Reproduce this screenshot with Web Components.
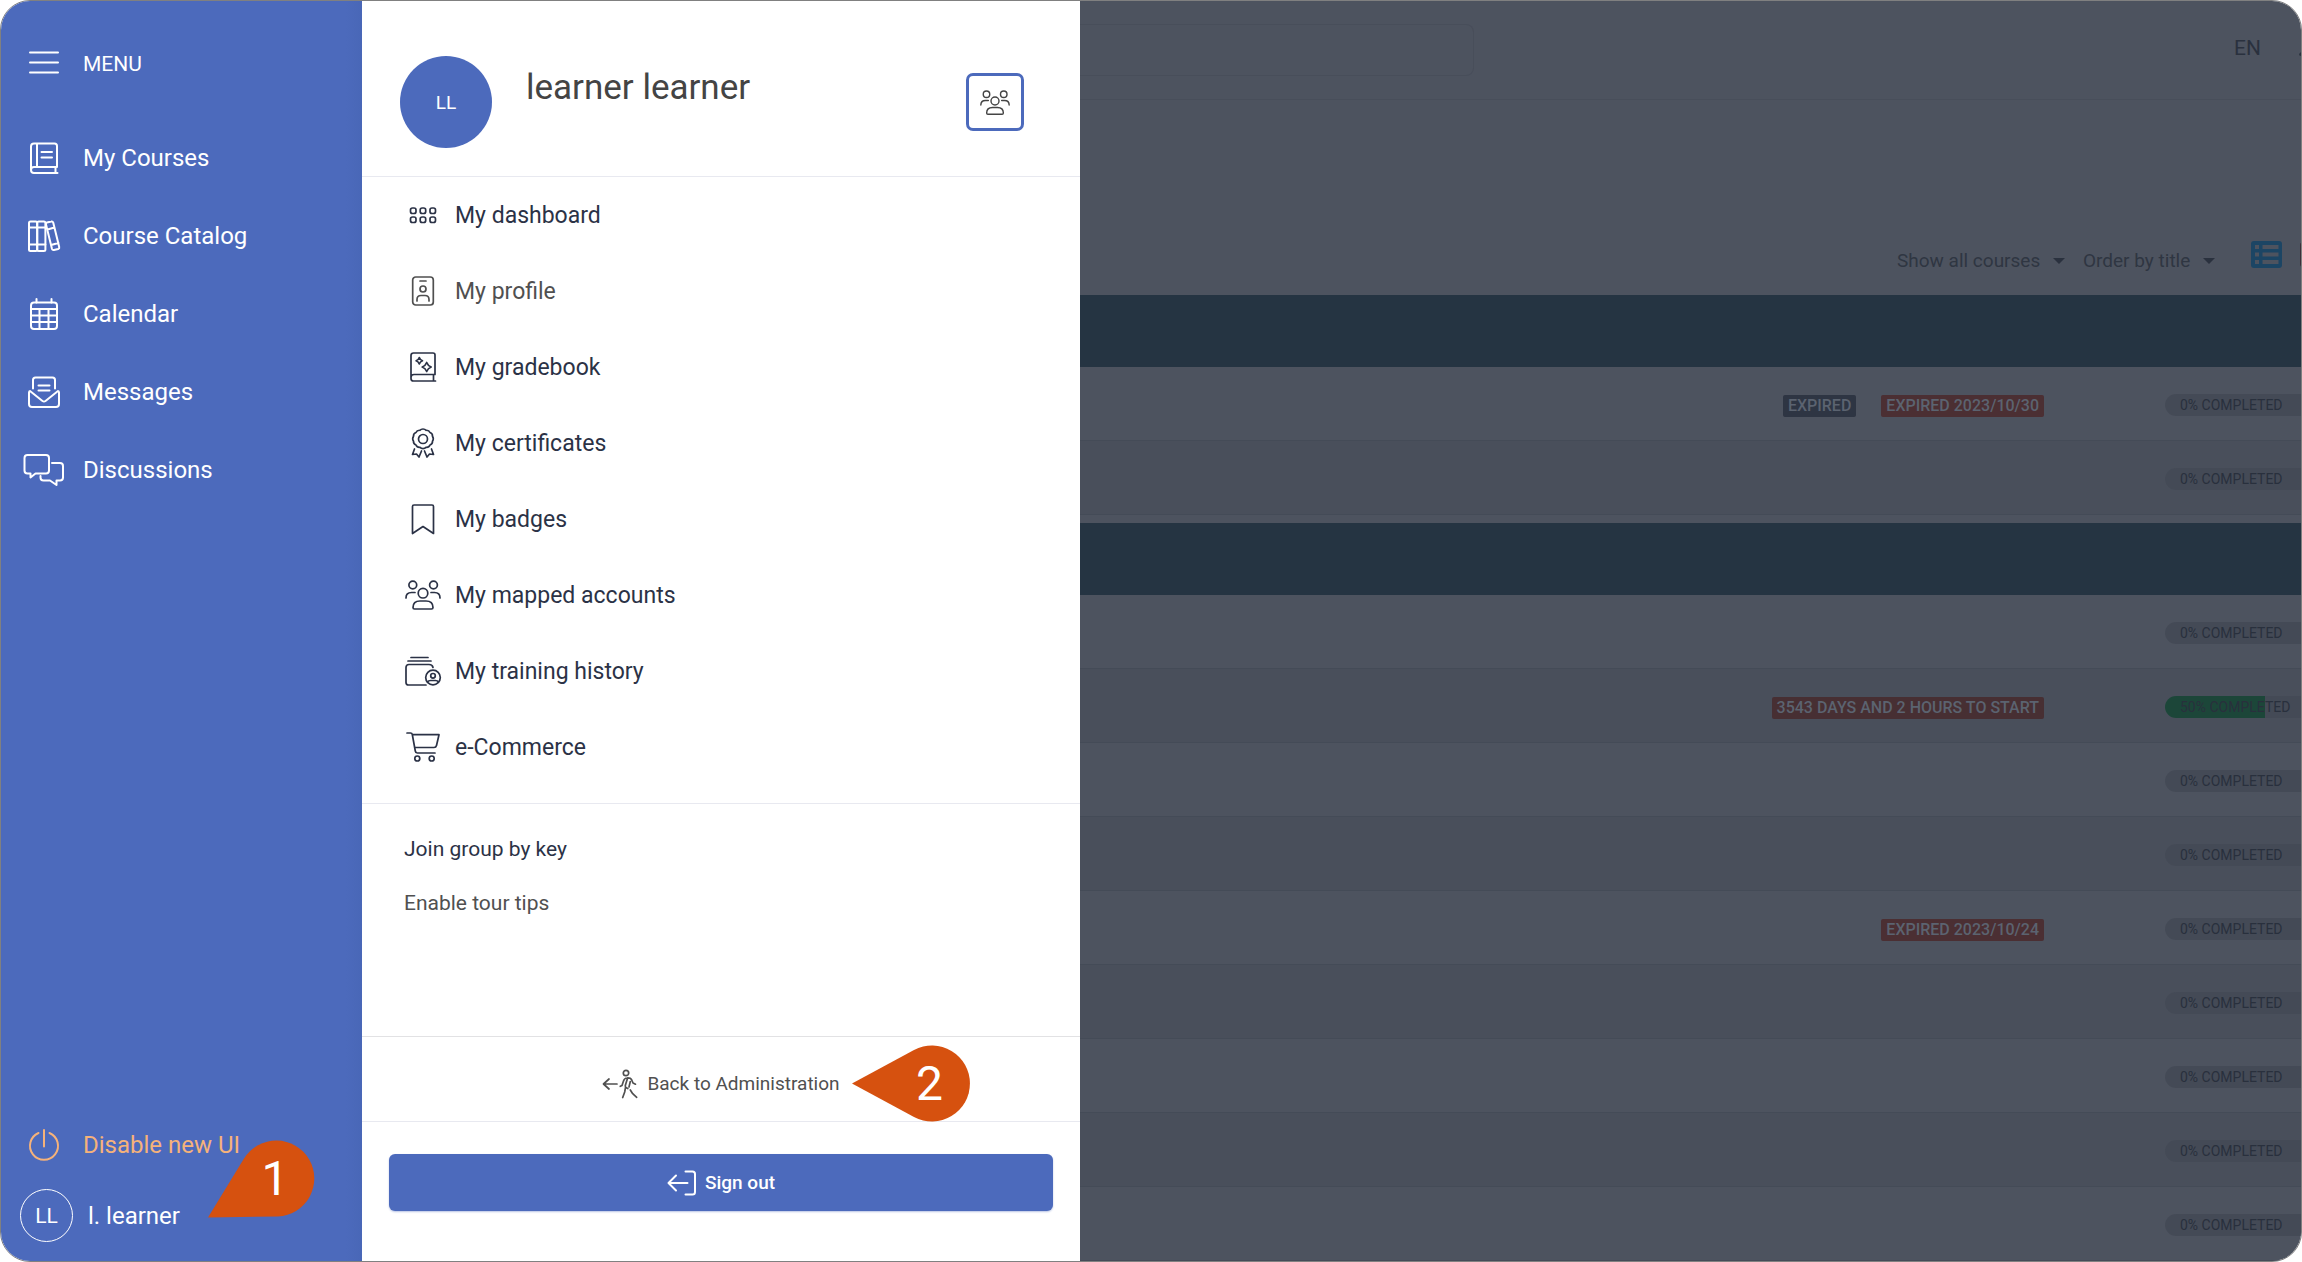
<!DOCTYPE html>
<html lang="en">
<head>
<meta charset="utf-8">
<title>My Courses</title>
<style>
    body {
        margin: 0;
        background: #fff;
        font-family: Roboto, "Liberation Sans", sans-serif;
    }
</style>
</head>
<body>
<learner-app></learner-app>

<script>
const ICONS = {
    menu: ['0 0 40 32', '<path d="M6 4.5h28M6 14.5h28M6 24.5h28"/>'],
    courses: ['0 0 40 32', '<path d="M33 25V4q0-2.500-2.500-2.500H10Q7 1.500 7 4.500v23.500q0 3 3 3h23.500M33 25H10q-3 0-3 3M31.500 25v6M13 2v23M17.500 10h10.500M17.500 15.500h10.500"/>'],
    catalog: ['0 0 40 32', '<rect x="5" y="1.5" width="8.2" height="29.5" rx="1.5"/><rect x="13.2" y="1.5" width="8.2" height="29.5" rx="1.5"/><path d="M5 7.500h16.400M5 24.500h16.400M22 4.500q-.5-1.600 1-2l4.200-1q1.500-.4 2 1l6 24.500q.4 1.500-1 2l-4.200 1q-1.500.4-2-1L22 4.500M23.500 9.500l7-2M27 25l7.500-2"/>'],
    calendar: ['0 0 40 32', '<rect x="7" y="4.5" width="26" height="26.5" rx="3"/><path d="M12.500 1v3.500M27.500 1v3.500M7 11h26M7 17.500h26M7 24h26M15.500 11v20M24.500 11v20"/>'],
    messages: ['0 0 40 32', '<path d="M9 12.500V4q0-2.500 2.500-2.500h17Q31 1.500 31 4v8.500M14.500 9.500h11M14.500 14.500h11M6 15q-1 0-1 1.500V28q0 3 3 3h24q3 0 3-3V16.500q0-1.500-1-1.500L21.500 25q-1.500 1-3 0Z"/>'],
    discussions: ['0 0 40 32', '<path d="M3.500 1h18.500q3 0 3 3v12.500q0 3-3 3H11.500L6.500 23.500v-4H3.500q-3 0-3-3V4q0-3 3-3ZM28 9h8q3 0 3 3v11.500q0 3-3 3h-3.500V31L26 26.500h-6.500q-3 0-3-3v-1.500"/>'],
    power: ['0 0 40 32', '<path d="M20 1v16.500M14.500 4A14 14 0 1 0 25.500 4"/>'],
    dashboard: ['0 0 36 30', '<rect x="5.5" y="8" width="5.5" height="5.5" rx="2"/><rect x="15.2" y="8" width="5.5" height="5.5" rx="2"/><rect x="25" y="8" width="5.5" height="5.5" rx="2"/><rect x="5.5" y="17" width="5.5" height="5.5" rx="2"/><rect x="15.2" y="17" width="5.5" height="5.5" rx="2"/><rect x="25" y="17" width="5.5" height="5.5" rx="2"/>'],
    profile: ['0 0 36 30', '<rect x="7.7" y="1" width="20.6" height="28" rx="3"/><path d="M15 5h6M12 25v-1.500q0-4 4-4h4q4 0 4 4V25"/><circle cx="18" cy="13" r="3"/>'],
    gradebook: ['0 0 36 30', '<path d="M30 22.500V3q0-2-2-2H8.500Q6 1 6 3.500v23Q6 29 8.500 29H30.500M30 22.500H9q-3 0-3 3M28.500 22.500V29"/><path d="M14.300 5.500q.8 2.400 3.200 3.200-2.400.8-3.200 3.200-.8-2.400-3.200-3.200 2.400-.8 3.200-3.200ZM21.700 10.500q1.200 3.300 4.500 4.500-3.300 1.200-4.500 4.500-1.200-3.300-4.500-4.500 3.300-1.200 4.500-4.500Z"/>'],
    certificates: ['0 0 36 30', '<path d="M18 1q2 0 3 1.300 3-.3 4 2.200 2.700 1 2.500 3.800 1.600 2.500 0 5 .2 2.700-2.500 3.700-1 2.600-4 2.300-1 1.400-3 1.400t-3-1.400q-3 .3-4-2.300-2.700-1-2.500-3.700-1.600-2.500 0-5Q8.300 5.500 11 4.500q1-2.500 4-2.200Q16 1 18 1Z"/><circle cx="18" cy="11" r="4.5"/><path d="M9.500 21l-2 5.500 4-.5 2.500 3 2.500-6M26.500 21l2 5.500-4-.5-2.500 3-2.500-6"/>'],
    badges: ['0 0 36 30', '<path d="M9 1h18q1.500 0 1.500 1.500V29.500L18 22.500 7.500 29.500V2.500Q7.500 1 9 1Z"/>'],
    accounts: ['0 0 36 30', '<circle cx="7.8" cy="5" r="3.9"/><circle cx="28.5" cy="5" r="3.9"/><circle cx="18" cy="13.2" r="4.8"/><path d="M1 18q0-5.500 5.500-5.500h3.500M35 18q0-5.500-5.500-5.500H26M9.500 29q-1.500 0-1.500-1.500 0-6.500 7-6.500h6q7 0 7 6.500 0 1.500-1.500 1.500Z"/>'],
    history: ['0 0 36 30', '<path d="M6 1.500h17M3 5h23M21 29H3.500Q1 29 1 26.500v-15Q1 8.500 4 8.500h20q3.500 0 4 3"/><circle cx="28" cy="21.5" r="7.3"/><circle cx="28" cy="19.8" r="2.3"/><path d="M22.500 26q1-1.500 3-1.500h5q2 0 3 1.500"/>'],
    cart: ['0 0 36 30', '<path d="M2 1h3.500Q7 1 7.300 2.500L10.300 19q.3 2 2 2H30M7.500 2.700H34L31.500 13.500Q31 15.500 29 15.500H9.700"/><circle cx="12.3" cy="26.5" r="2.5"/><circle cx="26.7" cy="26.5" r="2.5"/>'],
    walk: ['0 0 36 30', '<path d="M15 15H1.500M7 10l-5.500 5 5.500 5M18.300 17.300l1.700-.8 1.500-4.500q1-3 3.500-3 3.500-.3 4.500 1.500l1.500 3.500 2.500 1.200M25.300 10l-2 6.500q-.3 1.500 1 2.200l1.500.8M28.300 12.500l-1.300 5.500M23.500 18.500l-.8 4.500-2 5.500M28.300 21l2.400 3.700 4 3.600"/><circle cx="24" cy="4" r="2.7"/>'],
    signout: ['0 0 30 26', '<path d="M20.500 13H2M9 5.500L1.500 13 9 20.500M18.500 1.500h7q2.500 0 2.500 2.500v18q0 2.500-2.500 2.500h-7"/>'],
    list: ['0 0 31 27', '<path fill="currentColor" stroke="none" fill-rule="evenodd" d="M3 0h25q3 0 3 3v21q0 3-3 3H3q-3 0-3-3V3q0-3 3-3ZM4 4v4h4V4ZM11.500 4v4h16V4ZM4 11.500v4h4v-4ZM11.500 11.500v4h16v-4ZM4 19v4h4v-4ZM11.500 19v4h16v-4Z"/>'],
    tiles: ['0 0 31 27', '<path fill="currentColor" stroke="none" d="M3 1h25q3 0 3 3v19q0 3-3 3H3q-3 0-3-3V4q0-3 3-3Z"/>'],
    bell: ['0 0 24 24', '<path fill="currentColor" stroke="none" d="M12 1q6 0 7 8 0 5 3 7.500V18H2q-2 0-2-2 3-2 4-7 1-8 8-8ZM9 20h6q-1 3-3 3t-3-3Z"/>']
};

class UiIcon extends HTMLElement {
    constructor(){
        super();
        this.attachShadow({ mode: 'open' });
    }
    connectedCallback(){
        const [viewBox, shapes] = ICONS[this.getAttribute('name')];
        const [, , width, height] = viewBox.split(' ');
        this.shadowRoot.innerHTML = `
            <style>
                :host { display: block; flex: none; }
                svg {
                    display: block;
                    width: var(--icon-width, ${width}px);
                    height: var(--icon-height, ${height}px);
                    overflow: visible;
                    fill: none;
                    stroke: currentColor;
                    stroke-width: var(--icon-stroke, 2);
                    stroke-linecap: round;
                    stroke-linejoin: round;
                }
            </style>
            <svg viewBox="${viewBox}" aria-hidden="true">${shapes}</svg>
        `;
    }
}
window.customElements.define('ui-icon', UiIcon);

// Numbered pointer, its tip on the left side of the host
class StepMarker extends HTMLElement {
    constructor(){
        super();
        this.attachShadow({ mode: 'open' });
    }
    connectedCallback(){
        const down = this.getAttribute('points') === 'down';
        const shape = down
            ? 'M0 77.500L36 18.500A38 38 0 1 1 70 76.500Z'
            : 'M0 38.500L62 5A38 38 0 1 1 62 72Z';
        this.shadowRoot.innerHTML = `
            <style>
                :host {
                    display: block;
                    width: ${down ? 108 : 119}px;
                    height: 78px;
                    color: #fff;
                    font-size: 48px;
                    line-height: 78px;
                    pointer-events: none;
                }
                div { display: grid; }
                svg, span { grid-area: 1 / 1; }
                svg { width: 100%; height: 78px; }
                span { width: 82px; justify-self: end; text-align: center; }
            </style>
            <div>
                <svg viewBox="0 0 ${down ? 108 : 119} 78" aria-hidden="true"><path fill="#d6510f" d="${shape}"/></svg>
                <span><slot></slot></span>
            </div>
        `;
    }
}
window.customElements.define('step-marker', StepMarker);

class SideLink extends HTMLElement {
    constructor(){
        super();
        this.attachShadow({ mode: 'open' });
    }
    connectedCallback(){
        this.shadowRoot.innerHTML = `
            <style>
                :host { display: block; }
                a {
                    display: flex;
                    align-items: center;
                    gap: 19px;
                    min-height: var(--row-height, 78px);
                    padding: 0 23px;
                    color: inherit;
                    font-size: 24px;
                    text-decoration: none;
                }
            </style>
            <a href="#"><ui-icon name="${this.getAttribute('icon')}"></ui-icon><slot></slot></a>
        `;
    }
}
window.customElements.define('side-link', SideLink);

class SideBar extends HTMLElement {
    constructor(){
        super();
        this.attachShadow({ mode: 'open' });
        this.shadowRoot.innerHTML = `
            <style>
                :host {
                    display: flex;
                    flex-direction: column;
                    background: linear-gradient(to left, #4967b7, #4c6abc 16px);
                    color: #fff;
                    padding: 24px 0 10px;
                    box-sizing: border-box;
                }
                button {
                    display: flex;
                    align-items: center;
                    gap: 19px;
                    height: 78px;
                    padding: 0 23px;
                    margin-bottom: 16px;
                    border: 0;
                    background: none;
                    color: inherit;
                    font: inherit;
                    font-size: 21px;
                }
                nav { flex: 1; }
                .toggle {
                    color: #f5b27a;
                    --row-height: 71px;
                }
                .user {
                    display: flex;
                    align-items: center;
                    gap: 15px;
                    height: 71px;
                    padding-left: 19px;
                    color: inherit;
                    font-size: 24px;
                    text-decoration: none;
                }
                .initials {
                    display: grid;
                    place-items: center;
                    width: 53px;
                    height: 53px;
                    box-sizing: border-box;
                    border: 1px solid #fff;
                    border-radius: 50%;
                    font-size: 21px;
                }
                .name { position: relative; }
                step-marker {
                    position: absolute;
                    left: calc(100% + 28px);
                    bottom: 12px;
                }
            </style>
            <button type="button"><ui-icon name="menu"></ui-icon>MENU</button>
            <nav>
                <side-link icon="courses">My Courses</side-link>
                <side-link icon="catalog">Course Catalog</side-link>
                <side-link icon="calendar">Calendar</side-link>
                <side-link icon="messages">Messages</side-link>
                <side-link icon="discussions">Discussions</side-link>
            </nav>
            <side-link class="toggle" icon="power">Disable new UI</side-link>
            <a class="user" href="#">
                <span class="initials">LL</span>
                <span class="name">l. learner<step-marker points="down">1</step-marker></span>
            </a>
        `;
    }
}
window.customElements.define('side-bar', SideBar);

class DrawerLink extends HTMLElement {
    constructor(){
        super();
        this.attachShadow({ mode: 'open' });
    }
    connectedCallback(){
        this.shadowRoot.innerHTML = `
            <style>
                :host { display: block; }
                a {
                    display: flex;
                    align-items: center;
                    gap: 14px;
                    height: 76px;
                    padding: 0 43px;
                    color: inherit;
                    font-size: 23px;
                    text-decoration: none;
                }
            </style>
            <a href="#"><ui-icon name="${this.getAttribute('icon')}"></ui-icon><slot></slot></a>
        `;
    }
}
window.customElements.define('drawer-link', DrawerLink);

class UserDrawer extends HTMLElement {
    constructor(){
        super();
        this.attachShadow({ mode: 'open' });
        this.shadowRoot.innerHTML = `
            <style>
                :host {
                    display: flex;
                    flex-direction: column;
                    box-sizing: border-box;
                    background: #fff;
                    color: #2b3246;
                    --line: #e8e9f0;
                    --icon-stroke: 1.7;
                }
                header {
                    display: flex;
                    gap: 34px;
                    padding: 55px 56px 28px 38px;
                    border-bottom: 1px solid var(--line);
                }
                .avatar {
                    display: grid;
                    place-items: center;
                    flex: none;
                    width: 92px;
                    height: 92px;
                    border-radius: 50%;
                    background: #4c6abc;
                    color: #fff;
                    font-size: 19px;
                }
                h1 {
                    flex: 1;
                    margin: 8px 0 0;
                    color: #444;
                    font-size: 35px;
                    font-weight: 400;
                    line-height: 48px;
                }
                .switch {
                    display: grid;
                    place-items: center;
                    align-self: center;
                    width: 58px;
                    height: 58px;
                    padding: 0;
                    border: 3px solid #4c6abc;
                    border-radius: 7px;
                    background: #fff;
                    color: #444;
                    --icon-width: 30px;
                    --icon-height: 25px;
                }
                nav { border-bottom: 1px solid var(--line); padding-bottom: 18px; }
                .muted { color: #505050; }
                .extra {
                    flex: 1;
                    padding: 18px 42px;
                }
                .extra a {
                    display: block;
                    color: inherit;
                    font-size: 21px;
                    line-height: 54px;
                    text-decoration: none;
                }
                .extra .muted { color: #505050; }
                .back {
                    display: flex;
                    justify-content: center;
                    padding-top: 10px;
                    border-top: 1px solid #e2e2e4;
                    border-bottom: 1px solid var(--line);
                    line-height: 74px;
                }
                .back a {
                    position: relative;
                    display: flex;
                    align-items: center;
                    gap: 9px;
                    color: #505050;
                    font-size: 19px;
                    text-decoration: none;
                }
                step-marker {
                    position: absolute;
                    left: calc(100% + 12px);
                    top: calc(50% - 39px);
                }
                .footer { padding: 32px 27px 50px; }
                .signout {
                    display: flex;
                    align-items: center;
                    justify-content: center;
                    gap: 8px;
                    width: 100%;
                    height: 57px;
                    border: 0;
                    border-radius: 6px;
                    background: #4c6abc;
                    box-shadow: 0 1px 2px #b9c4e4;
                    color: #fff;
                    font: inherit;
                    font-size: 19px;
                    font-weight: 500;
                    --icon-stroke: 2;
                }
            </style>
            <header>
                <span class="avatar">LL</span>
                <h1>learner learner</h1>
                <button class="switch" type="button" aria-label="Switch account"><ui-icon name="accounts"></ui-icon></button>
            </header>
            <nav>
                <drawer-link icon="dashboard">My dashboard</drawer-link>
                <drawer-link class="muted" icon="profile">My profile</drawer-link>
                <drawer-link icon="gradebook">My gradebook</drawer-link>
                <drawer-link icon="certificates">My certificates</drawer-link>
                <drawer-link icon="badges">My badges</drawer-link>
                <drawer-link icon="accounts">My mapped accounts</drawer-link>
                <drawer-link icon="history">My training history</drawer-link>
                <drawer-link icon="cart">e-Commerce</drawer-link>
            </nav>
            <div class="extra">
                <a href="#">Join group by key</a>
                <a class="muted" href="#">Enable tour tips</a>
            </div>
            <div class="back">
                <a href="#"><ui-icon name="walk"></ui-icon>Back to Administration<step-marker>2</step-marker></a>
            </div>
            <div class="footer">
                <button class="signout" type="button"><ui-icon name="signout"></ui-icon>Sign out</button>
            </div>
        `;
    }
}
window.customElements.define('user-drawer', UserDrawer);

class CompletionBar extends HTMLElement {
    constructor(){
        super();
        this.attachShadow({ mode: 'open' });
    }
    connectedCallback(){
        const value = this.getAttribute('value');
        this.shadowRoot.innerHTML = `
            <style>
                :host {
                    display: block;
                    width: 200px;
                    box-sizing: border-box;
                    padding-left: 15px;
                    border-radius: 11px;
                    background: linear-gradient(to right, #1c4639 ${value}%, #444a56 ${value}%);
                    color: #29303d;
                    font-size: 14px;
                    line-height: 22px;
                }
            </style>
            ${value}% COMPLETED
        `;
    }
}
window.customElements.define('completion-bar', CompletionBar);

class CourseTable extends HTMLElement {
    constructor(){
        super();
        this.attachShadow({ mode: 'open' });
    }
    connectedCallback(){
        const courses = JSON.parse(this.getAttribute('courses'));
        this.shadowRoot.innerHTML = `
            <style>
                ${this._getCSS()}
            </style>
            <div class="category"></div>
            <table>
                <tbody>${courses.map(this._getRow).join('')}</tbody>
            </table>
        `;
    }
    _getRow(course){
        const labels = (course.labels ?? []).map(([kind, text]) => `<span class="${kind}">${text}</span>`);
        return `
            <tr>
                <td class="labels">${labels.join('')}</td>
                <td class="progress"><completion-bar value="${course.done ?? 0}"></completion-bar></td>
            </tr>
        `;
    }
    _getCSS(){
        return `
            :host { display: block; }
            .category {
                height: 72px;
                background: #253442;
            }
            table {
                width: 100%;
                table-layout: fixed;
                border-collapse: separate;
                border-spacing: 0;
            }
            tr:nth-child(even) { background: #494f5b; }
            td {
                height: 74px;
                box-sizing: border-box;
                padding: 2px 0 0;
                border-bottom: 1px solid #444b57;
            }
            .labels { padding: 4px 121px 0 0; text-align: right; }
            .progress { width: 136px; overflow: hidden; }
            span {
                display: inline-block;
                margin-left: 25px;
                padding: 0 5px;
                border-radius: 2px;
                color: #5b6370;
                font-size: 16px;
                font-weight: 500;
                line-height: 22px;
            }
            .closed { background: #2e3543; }
            .expired { background: #4b2f33; }
            .pending { background: #472f33; }
        `;
    }
}
window.customElements.define('course-table', CourseTable);

class CoursePage extends HTMLElement {
    constructor(){
        super();
        this.attachShadow({ mode: 'open' });
        const expired = '[{"labels":[["closed","EXPIRED"],["expired","EXPIRED 2023/10/30"]]},{}]';
        const current = '[{},{"done":50,"labels":[["pending","3543 DAYS AND 2 HOURS TO START"]]},{},{},{"labels":[["expired","EXPIRED 2023/10/24"]]},{},{},{},{}]';
        this.shadowRoot.innerHTML = `
            <style>
                :host {
                    display: block;
                    min-width: 0;
                    overflow: hidden;
                    background: #4d535f;
                    color: #2a313e;
                }
                header {
                    display: flex;
                    align-items: center;
                    height: 98px;
                    border-bottom: 1px solid #484e5a;
                }
                input {
                    width: 394px;
                    height: 52px;
                    box-sizing: border-box;
                    border: 1px solid #484e5a;
                    border-left: 0;
                    border-radius: 0 8px 8px 0;
                    background: none;
                    margin-right: auto;
                }
                button {
                    flex: none;
                    padding: 0;
                    border: 0;
                    background: none;
                    color: inherit;
                    font: inherit;
                }
                .language { font-size: 21px; margin: 0 38px 4px 0; }
                .bell { margin-right: -22px; }
                .toolbar {
                    display: flex;
                    justify-content: flex-end;
                    padding: 141px 0 27px;
                }
                label {
                    display: flex;
                    align-items: center;
                    margin-right: 18px;
                }
                label::after {
                    content: '';
                    margin: 12px 0 0 12px;
                    border: 6px solid transparent;
                    border-top-color: currentColor;
                    border-bottom: 0;
                }
                select {
                    appearance: none;
                    height: 38px;
                    margin: 0 0 -11px;
                    padding: 0;
                    border: 0;
                    background: none;
                    color: #2f3642;
                    font: inherit;
                    font-size: 19px;
                }
                .list { color: #1c4564; margin-left: 18px; }
                .tiles { color: #3c2f39; margin: 0 -30px 0 18px; }
                course-table { margin-bottom: 8px; }
            </style>
            <header>
                <input type="search" aria-label="Search">
                <button class="language" type="button">EN</button>
                <button class="bell" type="button" aria-label="Notifications"><ui-icon name="bell"></ui-icon></button>
            </header>
            <div class="toolbar">
                <label><select aria-label="Filter courses"><option>Show all courses</option></select></label>
                <label><select aria-label="Sort order"><option>Order by title</option></select></label>
                <button class="list" type="button" aria-label="List view"><ui-icon name="list"></ui-icon></button>
                <button class="tiles" type="button" aria-label="Tile view"><ui-icon name="tiles"></ui-icon></button>
            </div>
            <course-table courses='${expired}'></course-table>
            <course-table courses='${current}'></course-table>
        `;
    }
}
window.customElements.define('course-page', CoursePage);

class LearnerApp extends HTMLElement {
    constructor(){
        super();
        this.attachShadow({ mode: 'open' });
        this.shadowRoot.innerHTML = `
            <style>
                :host {
                    display: grid;
                    grid-template-columns: 361px min(718px, 40vw) 1fr;
                    grid-template-rows: minmax(0, 1fr);
                    height: 100vh;
                    box-sizing: border-box;
                    border: 1px solid #808080;
                    border-radius: 30px;
                    overflow: hidden;
                }
            </style>
            <side-bar></side-bar>
            <user-drawer></user-drawer>
            <course-page></course-page>
        `;
    }
}
window.customElements.define('learner-app', LearnerApp);
</script>
</body>
</html>
